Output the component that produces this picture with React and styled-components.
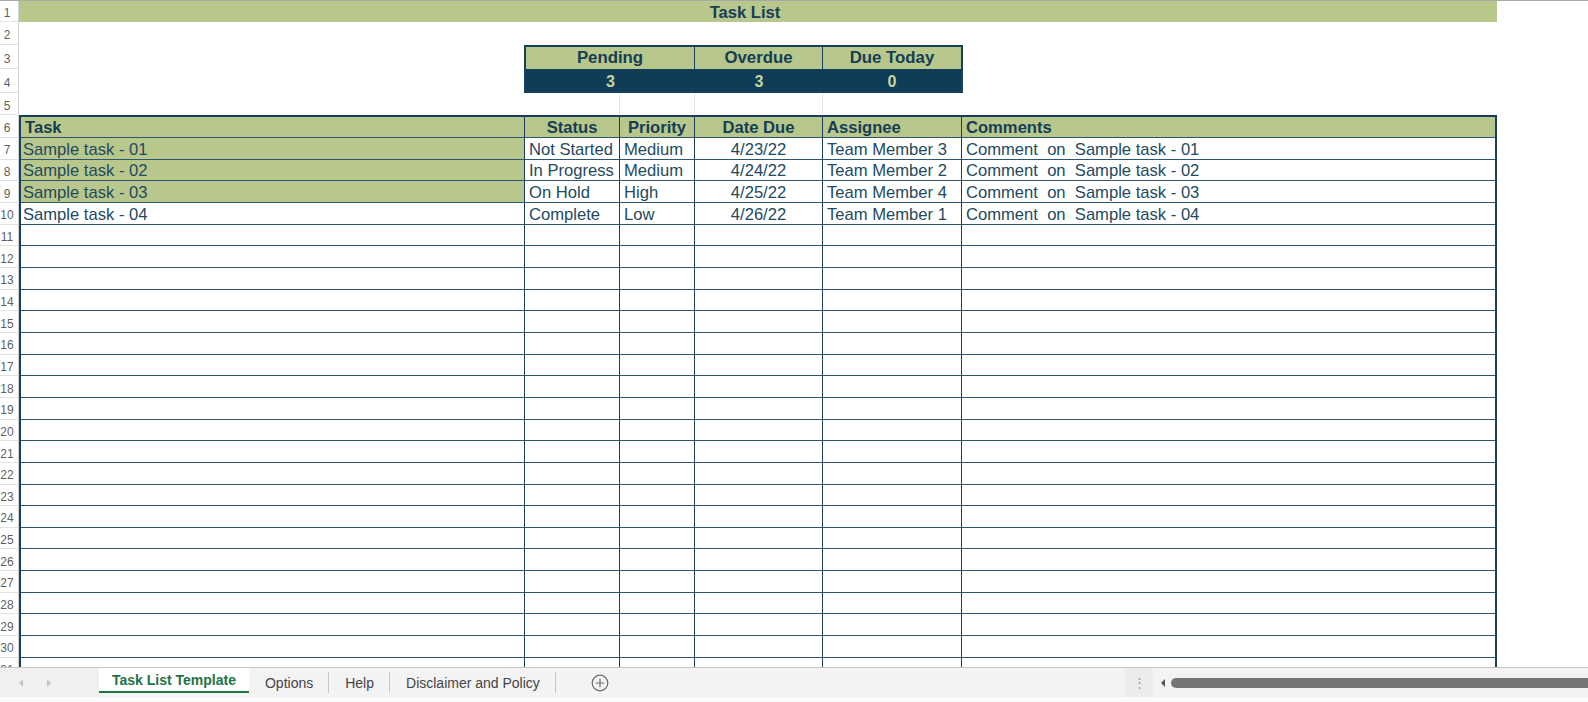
import React from 'react';
import styled, { createGlobalStyle } from 'styled-components';

const GREEN = '#b8c78b';
const NAVY = '#17415b';
const BAND = '#0f3c56';
const HEAD_TEXT = '#153e55';
const BODY_TEXT = '#234a5e';
const COLS = '504px 95px 75px 128px 139px 1fr';

const GlobalStyle = createGlobalStyle`
  html, body {
    margin: 0;
    padding: 0;
    height: 100%;
    overflow: hidden;
    background: #fff;
    font-family: 'Liberation Sans', Arial, sans-serif;
  }
`;

const Window = styled.div`
  display: flex;
  flex-direction: column;
  height: 100vh;
`;

const Sheet = styled.div`
  flex: 1;
  display: grid;
  grid-template-columns: 19px 1fr;
  border-top: 1px solid #a9a9a9;
  overflow: hidden;
`;

const RowHeaders = styled.div`
  display: flex;
  flex-direction: column;
  border-right: 1px solid #d4d4d4;
  background: #fff;
`;

const RowNum = styled.div`
  flex: none;
  height: ${p => p.$h}px;
  box-sizing: border-box;
  border-bottom: 1px solid #e2e2e2;
  display: flex;
  align-items: center;
  justify-content: center;
  padding: 4px 4px 0 0;
  font-size: 12px;
  color: #5f5f5f;
  white-space: nowrap;
`;

const Content = styled.div`
  display: flex;
  flex-direction: column;
`;

const TitleBar = styled.div`
  width: 1478px;
  height: 21px;
  flex: none;
  background: ${GREEN};
  display: flex;
  align-items: center;
  justify-content: center;
  padding: 2px 26px 0 0;
  box-sizing: border-box;
  font-size: 16.6px;
  font-weight: 700;
  color: ${HEAD_TEXT};
`;

const Blank = styled.div`
  height: ${p => p.$h}px;
  flex: none;
`;

const Summary = styled.div`
  margin-left: 505px;
  width: 439px;
  box-sizing: border-box;
  display: grid;
  grid-template-columns: 169px 128px 1fr;
  grid-template-rows: 22px 22px;
  border: 2px solid ${NAVY};
`;

const SummaryHead = styled.div`
  background: ${GREEN};
  border-right: 1px solid ${NAVY};
  &:nth-child(3) { border-right: none; }
  display: flex;
  align-items: center;
  justify-content: center;
  font-size: 16.8px;
  font-weight: 700;
  color: ${HEAD_TEXT};
`;

const SummaryValue = styled.div`
  background: ${BAND};
  display: flex;
  align-items: center;
  justify-content: center;
  padding-top: 3px;
  font-size: 16px;
  font-weight: 700;
  color: #c7d69f;
`;

const GapRow = styled.div`
  height: 22px;
  flex: none;
  width: 1478px;
  display: grid;
  grid-template-columns: ${COLS};
  padding: 0 2px;
  box-sizing: border-box;
`;

const GapCell = styled.div`
  border-right: 1px solid ${p => (p.$line ? '#e6e6e6' : 'transparent')};
`;

const Table = styled.div`
  width: 1478px;
  box-sizing: border-box;
  display: grid;
  grid-template-columns: ${COLS};
  grid-template-rows: 21px;
  grid-auto-rows: 21.67px;
  border: 2px solid ${NAVY};
  border-bottom: none;
`;

const Cell = styled.div`
  box-sizing: border-box;
  border-right: 1px solid ${NAVY};
  border-bottom: 1px solid #2f5670;
  &:nth-child(6n) { border-right: none; }
  display: flex;
  align-items: flex-end;
  justify-content: ${p => (p.$center ? 'center' : 'flex-start')};
  padding: 0 ${p => (p.$tight ? 2 : 4)}px;
  background: ${p => (p.$fill ? GREEN : '#fff')};
  color: ${p => (p.$head ? HEAD_TEXT : BODY_TEXT)};
  font-size: 16.6px;
  line-height: 18px;
  font-weight: ${p => (p.$head ? 700 : 400)};
  white-space: pre;
  overflow: hidden;
`;

const TabBar = styled.div`
  flex: none;
  height: 35px;
  box-sizing: border-box;
  display: flex;
  align-items: stretch;
  background: #f3f3f3;
  border-top: 1px solid #c9c9c9;
  border-bottom: 5px solid #fafafa;
  font-size: 14px;
  color: #454545;
`;

const NavArrows = styled.div`
  width: 99px;
  flex: none;
  display: flex;
  align-items: center;
  gap: 24px;
  padding-left: 19px;
  box-sizing: border-box;
  background: #f0f0f0;
`;

const Arrow = styled.span`
  width: 0;
  height: 0;
  border-top: 4px solid transparent;
  border-bottom: 4px solid transparent;
  ${p => (p.$left ? 'border-right' : 'border-left')}: 4px solid ${p => p.$color || '#c4c4c4'};
`;

const Tab = styled.div`
  flex: none;
  display: flex;
  align-items: center;
  padding: 0 15px 0 16px;
  margin: 4px 0;
  border-right: 1px solid #c8c8c8;
`;

const ActiveTab = styled.div`
  flex: none;
  display: flex;
  align-items: center;
  height: 25px;
  box-sizing: border-box;
  padding: 0 13px 0 13px;
  background: #fff;
  border-bottom: 2px solid #217346;
  color: #217346;
  font-weight: 700;
`;

const AddSheet = styled.div`
  display: flex;
  align-items: center;
  padding-left: 35px;
`;

const Filler = styled.div`
  flex: 1;
`;

const ScrollGrip = styled.div`
  width: 28px;
  flex: none;
  display: flex;
  align-items: center;
  justify-content: center;
  background: #ececec;
  color: #9a9a9a;
  font-size: 13px;
  margin-right: 8px;
`;

const ScrollTrack = styled.div`
  width: 439px;
  flex: none;
  display: flex;
  align-items: center;
  gap: 6px;
  margin-right: -12px;
`;

const Thumb = styled.div`
  flex: 1;
  height: 10px;
  border-radius: 5px;
  background: #767676;
`;

const tasks = [
  ['Sample task - 01', 'Not Started', 'Medium', '4/23/22', 'Team Member 3', 'Comment  on  Sample task - 01', true],
  ['Sample task - 02', 'In Progress', 'Medium', '4/24/22', 'Team Member 2', 'Comment  on  Sample task - 02', true],
  ['Sample task - 03', 'On Hold', 'High', '4/25/22', 'Team Member 4', 'Comment  on  Sample task - 03', true],
  ['Sample task - 04', 'Complete', 'Low', '4/26/22', 'Team Member 1', 'Comment  on  Sample task - 04', false],
];

const rowHeights = [21, 23, 24, 24, 22, 23, ...Array(25).fill(21.67)];
const emptyRows = 21;

const App = () => {
  return (
    <>
      <GlobalStyle />
      <Window>
        <Sheet>
          <RowHeaders>
            {rowHeights.map((h, i) => (
              <RowNum key={i} $h={h}>{i + 1}</RowNum>
            ))}
          </RowHeaders>

          <Content>
            <TitleBar>Task List</TitleBar>
            <Blank $h={23} />
            <Summary>
              <SummaryHead>Pending</SummaryHead>
              <SummaryHead>Overdue</SummaryHead>
              <SummaryHead>Due Today</SummaryHead>
              <SummaryValue>3</SummaryValue>
              <SummaryValue>3</SummaryValue>
              <SummaryValue>0</SummaryValue>
            </Summary>
            <GapRow>
              <GapCell />
              <GapCell $line />
              <GapCell $line />
              <GapCell $line />
              <GapCell />
              <GapCell />
            </GapRow>

            <Table>
              <Cell $head $fill>Task</Cell>
              <Cell $head $fill $center>Status</Cell>
              <Cell $head $fill $center>Priority</Cell>
              <Cell $head $fill $center>Date Due</Cell>
              <Cell $head $fill>Assignee</Cell>
              <Cell $head $fill>Comments</Cell>

              {tasks.map(([task, status, priority, due, who, comment, hl]) => (
                <React.Fragment key={task}>
                  <Cell $fill={hl} $tight>{task}</Cell>
                  <Cell>{status}</Cell>
                  <Cell>{priority}</Cell>
                  <Cell $center>{due}</Cell>
                  <Cell>{who}</Cell>
                  <Cell>{comment}</Cell>
                </React.Fragment>
              ))}

              {Array.from({ length: emptyRows * 6 }).map((_, i) => (
                <Cell key={'e' + i} />
              ))}
            </Table>
          </Content>
        </Sheet>

        <TabBar>
          <NavArrows>
            <Arrow $left />
            <Arrow />
          </NavArrows>
          <ActiveTab>Task List Template</ActiveTab>
          <Tab>Options</Tab>
          <Tab>Help</Tab>
          <Tab>Disclaimer and Policy</Tab>
          <AddSheet>
            <svg width="18" height="18" viewBox="0 0 18 18" fill="none" stroke="#6f6f6f" strokeWidth="1.2">
              <circle cx="9" cy="9" r="7.8" />
              <path d="M9 4.8v8.4M4.8 9h8.4" />
            </svg>
          </AddSheet>
          <Filler />
          <ScrollGrip>⋮</ScrollGrip>
          <ScrollTrack>
            <Arrow $left $color="#555" />
            <Thumb />
          </ScrollTrack>
        </TabBar>
      </Window>
    </>
  );
};

export default App;
